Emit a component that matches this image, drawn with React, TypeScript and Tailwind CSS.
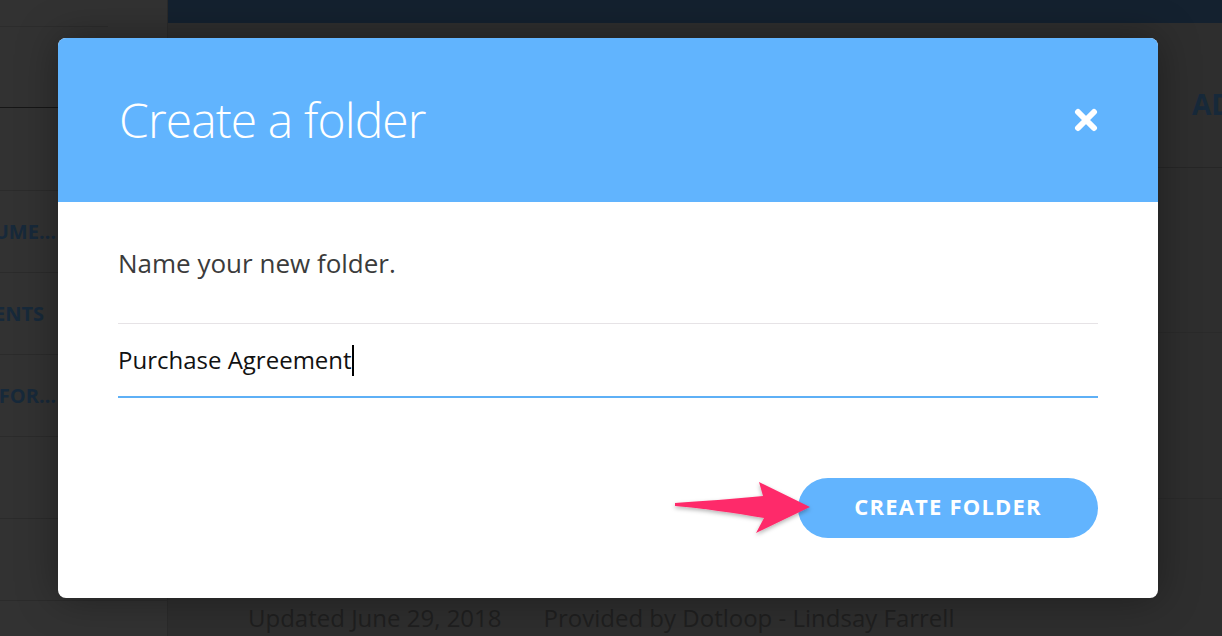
import React from 'react';

const sidebarRows = [
  { label: 'DOCUME…', pad: 'pr-[111px]' },
  { label: 'AGREEMENTS', pad: 'pr-[123px]' },
  { label: 'TEMPLATE FOR…', pad: 'pr-[111px]' },
  { label: '', pad: '' },
  { label: '', pad: '' },
];

function CloseIcon() {
  return (
    <svg width="24" height="24" viewBox="0 0 24 24" fill="none">
      <path d="M4 4L20 20M20 4L4 20" stroke="white" strokeWidth="6" strokeLinecap="round" />
    </svg>
  );
}

function PinkArrow() {
  return (
    <svg className="absolute inset-0 pointer-events-none" width="1222" height="636" viewBox="0 0 1222 636">
      <defs>
        <filter id="arrowShadow" x="-20%" y="-40%" width="140%" height="180%">
          <feDropShadow dx="0" dy="2" stdDeviation="2" floodColor="#000" floodOpacity="0.3" />
        </filter>
      </defs>
      <path
        d="M675 503 C700 501 735 499 763 496 L759 482 L810 507 L756 533 L764 518 C735 513 700 508 675 506 Z"
        fill="#fe2c6a"
        filter="url(#arrowShadow)"
      />
    </svg>
  );
}

export default function App() {
  return (
    <div className="relative w-[1222px] h-[636px] overflow-hidden flex bg-[#2e2e2e] font-['Open_Sans',sans-serif]">
      {/* background page, already dimmed */}
      <div className="w-[168px] shrink-0 flex flex-col bg-[#323232] border-r border-[#2a2a2a]">
        <div className="h-[108px] border-b border-[#161616]">
          <div className="h-[27px] w-[108px] border-b border-[#2c2c2c]" />
        </div>
        <div className="h-[83px] border-b border-[#2b2b2b]" />
        {sidebarRows.map((row, i) => (
          <div
            key={i}
            className={`h-[82px] border-b border-[#2b2b2b] flex items-center justify-end overflow-hidden whitespace-nowrap ${row.pad}`}
          >
            <span className="text-[20px] font-bold text-[#17293a]">{row.label}</span>
          </div>
        ))}
      </div>

      <div className="flex-1 flex flex-col">
        <div className="h-[24px] bg-[#14212f]" />
        <div className="h-[148px] border-b border-[#262626] pl-[1024px] pt-[60px] whitespace-nowrap">
          <span className="text-[28px] font-bold text-[#17293a]">ADD</span>
        </div>
        <div className="h-[172px] border-b border-[#2a2a2a]" />
        <div className="h-[173px] border-b border-[#2a2a2a]" />
        <div className="pt-[101px] pl-[80px] flex gap-[42px] whitespace-nowrap text-[24px] text-[#1f1f1f]">
          <span>Updated June 29, 2018</span>
          <span>Provided by Dotloop - Lindsay Farrell</span>
        </div>
      </div>

      {/* modal */}
      <div className="absolute inset-0 pl-[58px] pt-[38px]">
        <div className="w-[1100px] h-[560px] rounded-[8px] overflow-hidden bg-white flex flex-col shadow-[0_0_40px_rgba(0,0,0,0.35)]">
          <div className="h-[164px] bg-[#61b4fe] flex items-center justify-between pl-[61px] pr-[60px]">
            <h2 className="text-[48px] font-light text-white leading-none tracking-[-0.9px]">Create a folder</h2>
            <CloseIcon />
          </div>
          <div className="px-[60px] pt-[46px] flex flex-col">
            <p className="text-[26px] leading-[30px] text-[#3b3b3b]">Name your new folder.</p>
            <div className="mt-[45px] border-t border-[#e6e3e6]" />
            <div className="h-[74px] border-b-2 border-[#5eb0f6] flex items-center">
              <span className="text-[24px] text-[#111111]">Purchase Agreement</span>
              <span className="inline-block w-[2px] h-[31px] bg-black" />
            </div>
            <div className="mt-[80px] flex justify-end">
              <button className="w-[300px] h-[60px] rounded-full bg-[#62b4fe] text-white text-[22px] leading-[56px] pb-[4px] font-bold tracking-[1.2px]">
                CREATE FOLDER
              </button>
            </div>
          </div>
        </div>
      </div>

      <PinkArrow />
    </div>
  );
}
